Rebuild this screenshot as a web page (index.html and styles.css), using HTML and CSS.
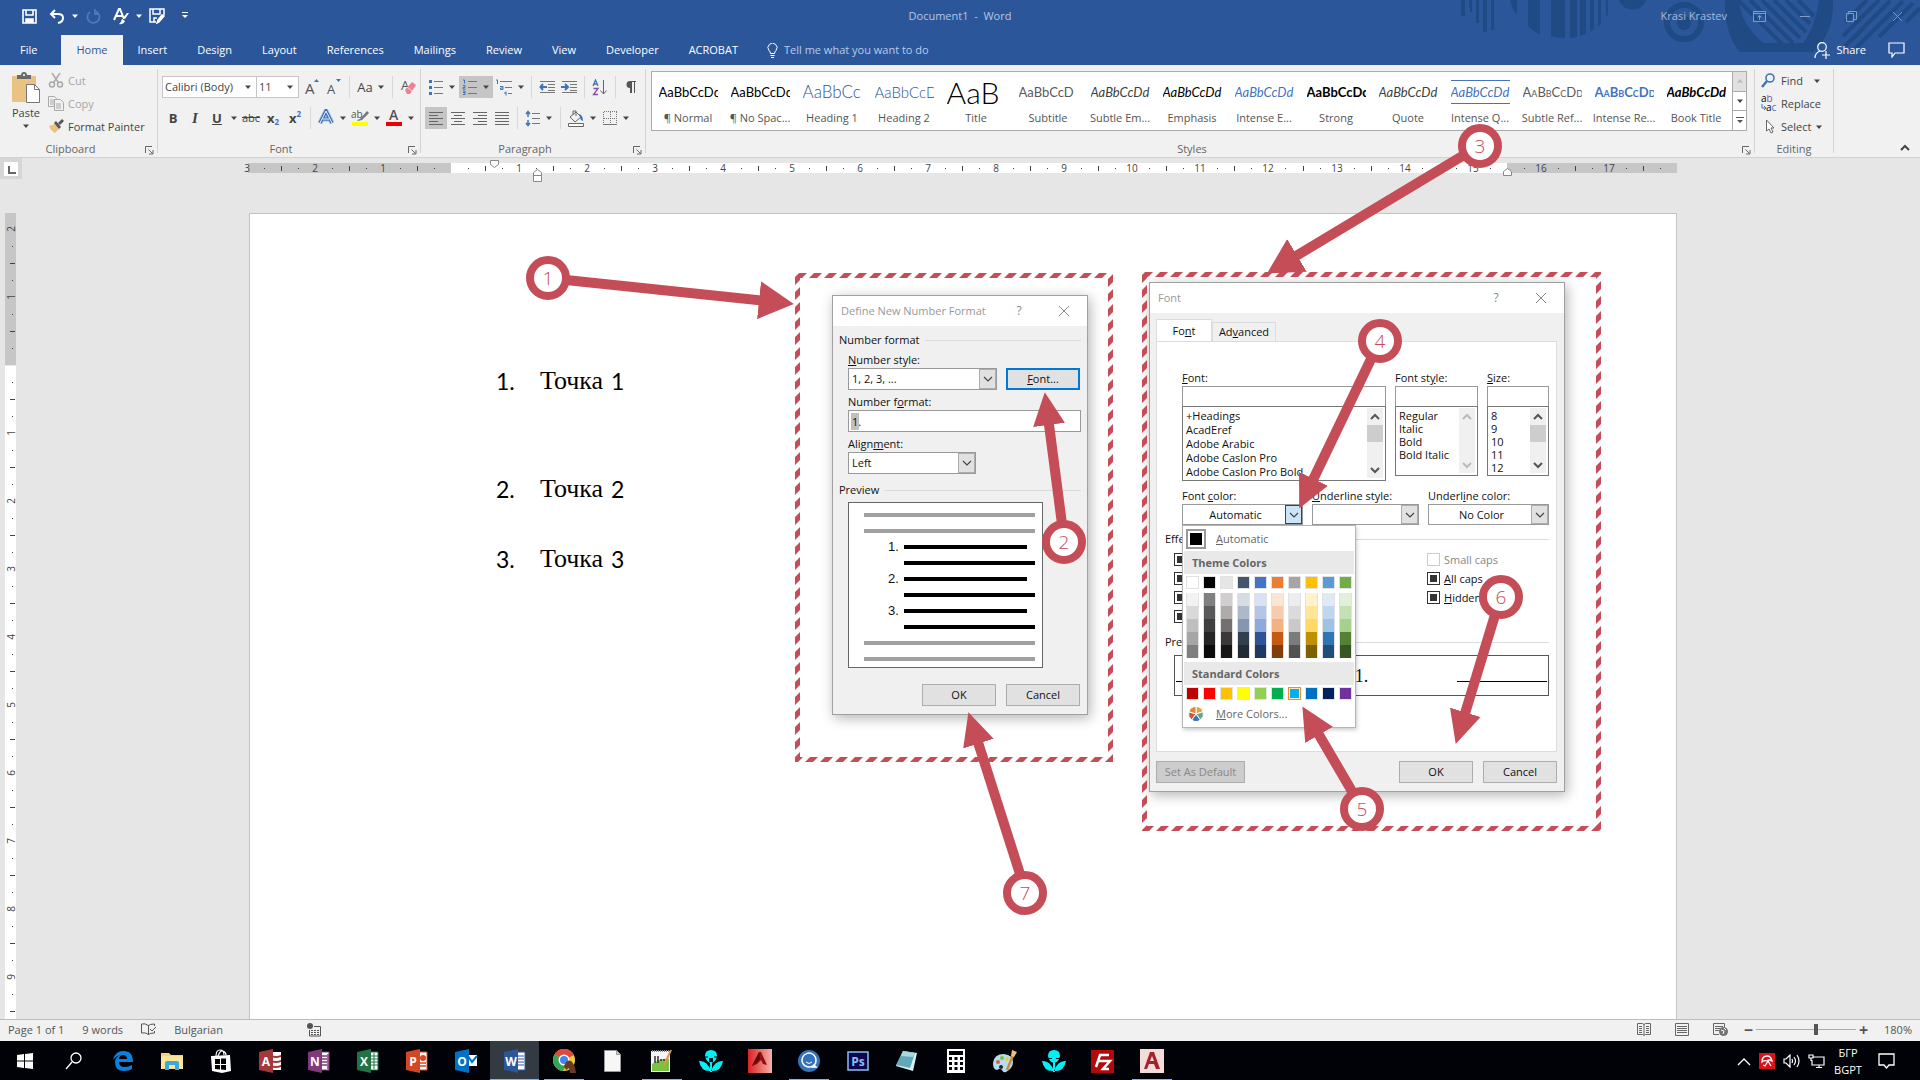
FILE: index.html
```html
<!DOCTYPE html>
<html lang="en">
<head>
    <meta charset="UTF-8">
    <meta name="viewport" content="width=device-width, initial-scale=1.0">
    <title>Document1 - Word</title>
    <link rel="stylesheet" href="styles.css">
</head>
<body>
    <!-- Shared icons -->
    <svg class="sprite" width="0" height="0">
        <symbol id="down" viewBox="0 0 8 8"><path d="M1 2.5h6L4 6z" fill="currentColor"/></symbol>
        <symbol id="chevron" viewBox="0 0 10 10"><path d="M1 3l4 4 4-4" fill="none" stroke="currentColor" stroke-width="1.2"/></symbol>
        <symbol id="chevron-up" viewBox="0 0 10 10"><path d="M1 7l4-4 4 4" fill="none" stroke="currentColor" stroke-width="2"/></symbol>
        <symbol id="chevron-down" viewBox="0 0 10 10"><path d="M1 3l4 4 4-4" fill="none" stroke="currentColor" stroke-width="2"/></symbol>
        <symbol id="launcher" viewBox="0 0 9 9"><path d="M.5 7V.5H7M3.500 3.500l4 4M8 4v4H4" fill="none" stroke="#666"/></symbol>
        <symbol id="cross" viewBox="0 0 12 12"><path d="M1 1l10 10M11 1L1 11" fill="none" stroke="currentColor"/></symbol>
    </svg>

    <header class="top">
        <svg class="art" width="480" height="65" viewBox="1440 0 480 65">
            <g fill="#204a84">
                <path d="M1461 0h4v16h-4zM1469 0h3v7h-3zM1476 0h3v23h-3zM1483 0h4v32h-4zM1491 0h3v30h-3zM1470 0h2v12h-2z"/>
                <path d="M1510 0h7v15q-5-6-7-15zM1528 0h12v35q-7-4-12-9zM1551 0h14v38q-8 0-14-2zM1570 0h7v37l-7 1zM1580 0h6v34l-6 2zM1590 0h4v29l-4 3zM1598 0h3v23l-3 4zM1606 0h2v14l-2 3z"/>
                <path d="M1619 0a14 13 0 0 0 27 0z"/>
                <circle cx="1684" cy="23" r="7"/>
                <path d="M1725 0h14q1 18 14 33l10 10h40q12-15 16-43h14q1 34-20 52h-73q-16-18-15-52z"/>
            </g>
            <circle cx="1684" cy="22" r="17" fill="none" stroke="#204a84" stroke-width="6"/>
            <g stroke="#204a84" stroke-width="4" fill="none">
                <path d="M1738 0l44 44M1750 0l43 43M1762 0l38 38M1774 0l32 32M1786 0l24 24M1798 0l16 16M1845 22l22-22M1843 36l36-36M1845 46l45-45M1852 52l51-51M1879 37l34-34M1906 22l14-14M1852 40l12-12" />
            </g>
        </svg>
        <div class="titlebar">
            <div class="quick">
                <button aria-label="Save"><svg width="15" height="15" viewBox="0 0 15 15" fill="none" stroke="#fff" stroke-width="1.600"><path d="M1 1h13v13H1zM4 1v5h7V1"/><path d="M4 14v-4h7v4" fill="#fff"/></svg></button>
                <button aria-label="Undo"><svg width="16" height="15" viewBox="0 0 16 15" fill="none" stroke="#fff" stroke-width="2"><path d="M6 1L2 5l4 4M2 5h7q5 0 5 4t-5 5"/></svg></button>
                <button class="arrow" aria-label="Undo list"><svg width="8" height="8"><use href="#down"/></svg></button>
                <button class="dim" aria-label="Repeat"><svg width="15" height="15" viewBox="0 0 15 15" fill="none" stroke="#5577b2" stroke-width="1.800"><path d="M10 2.500A6 6 0 1 1 4 3M9 0v5h4"/></svg></button>
                <button aria-label="Style"><svg width="17" height="17" viewBox="0 0 17 17"><path d="M1 12L6 1h1l4 10M3 8h6" fill="none" stroke="#fff" stroke-width="2"/><path d="M16 5l-4 6-2-1 4-5zM9 11l3 2q-2 4-6 3 2-1 3-5z" fill="#fff"/></svg></button>
                <button class="arrow" aria-label="Style list"><svg width="8" height="8"><use href="#down"/></svg></button>
                <button aria-label="Save as"><svg width="17" height="16" viewBox="0 0 17 16" fill="none" stroke="#fff" stroke-width="1.500"><path d="M7 14H1V1h14v6M4 1v5h7V1M5 14v-4h3"/><path d="M15 8l-5 6-2 1 1-3 4-5z" fill="#fff"/></svg></button>
                <button aria-label="Customize"><svg width="8" height="10" viewBox="0 0 8 10" fill="#fff"><path d="M1 1h6v1H1zM1 4h6L4 7z"/></svg></button>
            </div>
            <div class="doc-title">Document1&nbsp; -&nbsp; Word</div>
            <div class="window-tools">
                <span>Krasi Krastev</span>
                <button aria-label="Ribbon options"><svg width="13" height="11" viewBox="0 0 13 11" fill="none" stroke="currentColor"><path d="M.5.500h12v10H.5zM.5 2.500h12M6.500 9V4.500M4.500 6.500l2-2 2 2"/></svg></button>
                <button aria-label="Minimize"><svg width="10" height="10" viewBox="0 0 10 10"><path d="M0 5.500h10" stroke="currentColor"/></svg></button>
                <button aria-label="Restore"><svg width="11" height="11" viewBox="0 0 11 11" fill="none" stroke="currentColor"><path d="M.5 2.500h7v8h-7zM2.500 2V.5h8v8H8"/></svg></button>
                <button aria-label="Close"><svg width="11" height="11"><use href="#cross"/></svg></button>
            </div>
        </div>
        <nav class="tabs">
            <a class="file" href="#">File</a>
            <a class="active" href="#">Home</a>
            <a href="#">Insert</a>
            <a href="#">Design</a>
            <a href="#">Layout</a>
            <a href="#">References</a>
            <a href="#">Mailings</a>
            <a href="#">Review</a>
            <a href="#">View</a>
            <a href="#">Developer</a>
            <a href="#">ACROBAT</a>
            <a class="tell" href="#"><svg width="11" height="15" viewBox="0 0 11 15" fill="none" stroke="#fff"><path d="M3.500 10.500Q3.500 9 2 7.500a4.500 4.500 0 1 1 7 0Q7.500 9 7.500 10.500zM3.500 12.500h4M4 14.500h3"/></svg>Tell me what you want to do</a>
            <a class="share" href="#"><svg width="16" height="17" viewBox="0 0 16 17" fill="none" stroke="#fff" stroke-width="1.200"><circle cx="8" cy="5" r="4.300"/><path d="M1 16q0-5 5-7M12 9v8M8 13h8"/></svg>Share</a>
            <button class="comment" aria-label="Comments"><svg width="17" height="16" viewBox="0 0 17 16" fill="none" stroke="#fff" stroke-width="1.200"><path d="M1 1h15v10H7l-3 4v-4H1z"/></svg></button>
        </nav>
    </header>

    <section class="ribbon">
        <div class="group clipboard">
            <div class="content">
                <button class="paste">
                    <svg width="30" height="32" viewBox="0 0 30 32"><path d="M1 4h24v26H1z" fill="#eac282"/><path d="M6 7V3h4q0-3 3-3t3 3h4v4z" fill="#6a6a6a"/><circle cx="13" cy="3" r="1" fill="#fff"/><path d="M15.500 12.500h8l5 5v13h-13z" fill="#fff" stroke="#777"/><path d="M23.500 12.500v5h5" fill="none" stroke="#777"/></svg>
                    Paste
                    <svg width="8" height="8"><use href="#down"/></svg>
                </button>
                <div class="stack">
                    <button class="off"><svg width="16" height="15" viewBox="0 0 16 15" fill="none" stroke="#aaa" stroke-width="1.500"><path d="M4 0l6 9M12 0L6 9"/><circle cx="4" cy="11.500" r="2.500"/><circle cx="12" cy="11.500" r="2.500"/></svg>Cut</button>
                    <button class="off"><svg width="16" height="15" viewBox="0 0 16 15" fill="#f1f1f1" stroke="#aaa"><path d="M.5.500h6l2 2v8h-8zM2 4h4M2 6h4M2 8h4"/><path d="M6.500 3.500h6l3 3v8h-9zM8 8h5M8 10h5M8 12h5"/></svg>Copy</button>
                    <button><svg width="16" height="15" viewBox="0 0 16 15"><path d="M1 7l6-2 4 5-4 4q-4-2-6-7z" fill="#eac282"/><path d="M6 4l2-2 5 6-2 2zM10 4l4-4 2 2-4 4z" fill="#555"/></svg>Format Painter</button>
                </div>
            </div>
            <div class="caption">Clipboard<svg width="9" height="9"><use href="#launcher"/></svg></div>
        </div>

        <div class="group font">
            <div class="content">
                <div class="row">
                    <div class="box wide"><select aria-label="Font"><option>Calibri (Body)</option></select><svg width="8" height="8"><use href="#down"/></svg></div>
                    <div class="box narrow"><select aria-label="Font size"><option>11</option></select><svg width="8" height="8"><use href="#down"/></svg></div>
                    <button aria-label="Grow font"><svg width="16" height="18" viewBox="0 0 16 18"><text x="1" y="16" font-size="15">A</text><path d="M10 4h5l-2.500-3z" fill="#3f74b8"/></svg></button>
                    <button aria-label="Shrink font"><svg width="16" height="18" viewBox="0 0 16 18"><text x="1" y="16" font-size="13">A</text><path d="M10 1h5l-2.500 3z" fill="#3f74b8"/></svg></button>
                    <i></i>
                    <button class="split" aria-label="Change case"><b class="case">Aa</b><svg width="8" height="8"><use href="#down"/></svg></button>
                    <i></i>
                    <button aria-label="Clear formatting"><svg width="17" height="18" viewBox="0 0 17 18"><text x="1" y="12" font-size="13">A</text><path d="M5 12l7-8 4 3-6 9H7z" fill="#ea8296"/><path d="M7 9l5 4" stroke="#f8d5dc"/></svg></button>
                </div>
                <div class="row">
                    <button class="bold">B</button>
                    <button class="ital">I</button>
                    <button class="under">U</button>
                    <button class="arrow" aria-label="Underline list"><svg width="8" height="8"><use href="#down"/></svg></button>
                    <button class="strike">abc</button>
                    <button class="bold">x<sub>2</sub></button>
                    <button class="bold">x<sup>2</sup></button>
                    <i></i>
                    <button class="split" aria-label="Text effects"><svg width="18" height="18" viewBox="0 0 18 18"><path d="M3 14L9 2l6 12M5.500 10h7" fill="none" stroke="#9dc0e8" stroke-width="5"/><path d="M3 14L9 2l6 12M5.500 10h7" fill="none" stroke="#2f66ad" stroke-width="3"/><path d="M3 14L9 2l6 12M5.500 10h7" fill="none" stroke="#fff" stroke-width="1"/></svg><svg width="8" height="8"><use href="#down"/></svg></button>
                    <button class="split" aria-label="Highlight"><svg width="18" height="18" viewBox="0 0 18 18"><text x="0" y="9" font-size="10">ab</text><path d="M16 2l-7 8-3 1 1 1 4-1 7-7z" fill="#777"/><path d="M1 13h16v4H1z" fill="#ff0"/></svg><svg width="8" height="8"><use href="#down"/></svg></button>
                    <button class="split" aria-label="Font color"><svg width="18" height="18" viewBox="0 0 18 18"><text x="4" y="11" font-size="14" font-weight="600">A</text><path d="M1 13h16v4H1z" fill="#e00"/></svg><svg width="8" height="8"><use href="#down"/></svg></button>
                </div>
            </div>
            <div class="caption">Font<svg width="9" height="9"><use href="#launcher"/></svg></div>
        </div>

        <div class="group para">
            <div class="content">
                <div class="row">
                    <button class="split" aria-label="Bullets"><svg width="16" height="16" viewBox="0 0 16 16"><path d="M1 1h3v3H1zM1 7h3v3H1zM1 13h3v3H1z" fill="#3f74b8"/><path d="M6 2.500h9M6 8.500h9M6 14.500h9" stroke="#777"/></svg><svg width="8" height="8"><use href="#down"/></svg></button>
                    <button class="split on" aria-label="Numbering"><svg width="16" height="16" viewBox="0 0 16 16"><path d="M1 1h1.500v3.500M1 6.500h2v2H1v1.500h2.500M1 12h2v3.500H1M1 13.500h2" fill="none" stroke="#3f74b8"/><path d="M6 2.500h9M6 8.500h9M6 14.500h9" stroke="#777"/></svg><svg width="8" height="8"><use href="#down"/></svg></button>
                    <button class="split" aria-label="Multilevel list"><svg width="18" height="17" viewBox="0 0 18 17"><path d="M1 1h1.500v4M5 7.500h3v3H5.500V9H8M11 12.500v4M9 14h2" fill="none" stroke="#3f74b8"/><path d="M5 2.500h12M10 8.500h7M13 14.500h4" stroke="#777"/></svg><svg width="8" height="8"><use href="#down"/></svg></button>
                    <i></i>
                    <button aria-label="Decrease indent"><svg width="17" height="14" viewBox="0 0 17 14" fill="none"><path d="M1 1.500h15M9 4.500h7M9 7.500h7M9 10.500h7M1 12.500h15" stroke="#777"/><path d="M8 7H2M4 4L1.500 7 4 10" stroke="#3f74b8" stroke-width="2"/></svg></button>
                    <button aria-label="Increase indent"><svg width="17" height="14" viewBox="0 0 17 14" fill="none"><path d="M1 1.500h15M9 4.500h7M9 7.500h7M9 10.500h7M1 12.500h15" stroke="#777"/><path d="M0 7h6M4 4l3 3-3 3" stroke="#3f74b8" stroke-width="2"/></svg></button>
                    <i></i>
                    <button aria-label="Sort"><svg width="16" height="17" viewBox="0 0 16 17" fill="none"><path d="M1 7l2.500-6L6 7M2 5h3" stroke="#3f74b8" stroke-width="1.300"/><path d="M1.500 9.500H6l-4.500 6H6" stroke="#8250a8" stroke-width="1.300"/><path d="M11.500 1v14M8.500 11.500l3 3.500 3-3.500" stroke="#666"/></svg></button>
                    <i></i>
                    <button aria-label="Show marks"><svg width="12" height="14" viewBox="0 0 12 14"><path d="M5 8a3.500 3.500 0 0 1 0-7h6v1h-1v11H9V2H7v11H5z" fill="#555"/></svg></button>
                </div>
                <div class="row">
                    <button class="on" aria-label="Align left"><svg width="15" height="13" viewBox="0 0 15 13" stroke="#666"><path d="M0 .5h14M0 3.500h9M0 6.500h14M0 9.500h9M0 12.500h14"/></svg></button>
                    <button aria-label="Center"><svg width="15" height="13" viewBox="0 0 15 13" stroke="#666"><path d="M0 .5h14M3 3.500h8M0 6.500h14M3 9.500h8M0 12.500h14"/></svg></button>
                    <button aria-label="Align right"><svg width="15" height="13" viewBox="0 0 15 13" stroke="#666"><path d="M0 .5h14M5 3.500h9M0 6.500h14M5 9.500h9M0 12.500h14"/></svg></button>
                    <button aria-label="Justify"><svg width="15" height="13" viewBox="0 0 15 13" stroke="#666"><path d="M0 .5h14M0 3.500h14M0 6.500h14M0 9.500h14M0 12.500h14"/></svg></button>
                    <i></i>
                    <button class="split" aria-label="Line spacing"><svg width="16" height="17" viewBox="0 0 16 17" fill="none"><path d="M7 3.500h8M7 8.500h8M7 13.500h8" stroke="#777"/><path d="M3 2v5M1 4l2-2.500L5 4M3 10v5M1 13l2 2.500L5 13" stroke="#3f74b8" stroke-width="1.500"/></svg><svg width="8" height="8"><use href="#down"/></svg></button>
                    <i></i>
                    <button class="split" aria-label="Shading"><svg width="18" height="17" viewBox="0 0 18 17" fill="none" stroke="#666"><path d="M3 7l6-5 5 5-6 5zM6 5V1h3v5"/><path d="M12 4q4 1 4 7-3-1-3-4z" fill="#3f74b8" stroke="none"/><path d="M1.500 13.500h15v3h-15z" fill="#fff"/></svg><svg width="8" height="8"><use href="#down"/></svg></button>
                    <button class="split" aria-label="Borders"><svg width="15" height="15" viewBox="0 0 15 15" fill="none" stroke="#777"><path d="M1 .5h13M1 7.500h13M.5 1v13M7.500 1v13M13.500 1v13" stroke-dasharray="1 1"/><path d="M0 13.500h14"/></svg><svg width="8" height="8"><use href="#down"/></svg></button>
                </div>
            </div>
            <div class="caption">Paragraph<svg width="9" height="9"><use href="#launcher"/></svg></div>
        </div>

        <div class="group styles">
            <div class="gallery">
                <button><span class="normal">AaBbCcDd</span>¶ Normal</button>
                <button><span class="normal">AaBbCcDd</span>¶ No Spac...</button>
                <button><span class="h1">AaBbCc</span>Heading 1</button>
                <button><span class="h2">AaBbCcD</span>Heading 2</button>
                <button><span class="title">AaB</span>Title</button>
                <button><span class="subtitle">AaBbCcD</span>Subtitle</button>
                <button><span class="em grey">AaBbCcDd</span>Subtle Em...</button>
                <button><span class="em">AaBbCcDd</span>Emphasis</button>
                <button><span class="em blue">AaBbCcDd</span>Intense E...</button>
                <button><span class="strong">AaBbCcDd</span>Strong</button>
                <button><span class="em grey">AaBbCcDd</span>Quote</button>
                <button><span class="em blue lined">AaBbCcDd</span>Intense Q...</button>
                <button><span class="caps">AaBbCcDd</span>Subtle Ref...</button>
                <button><span class="caps strong blue">AaBbCcDd</span>Intense Re...</button>
                <button><span class="em strong">AaBbCcDd</span>Book Title</button>
                <div class="pager">
                    <button class="off" aria-label="Row up"><svg width="8" height="8" viewBox="0 0 8 8"><path d="M1 5.500h6L4 2z" fill="#bbb"/></svg></button>
                    <button aria-label="Row down"><svg width="8" height="8"><use href="#down"/></svg></button>
                    <button aria-label="More styles"><svg width="8" height="9" viewBox="0 0 8 9"><path d="M0 1h8v1H0zM1 4h6L4 7z" fill="#555"/></svg></button>
                </div>
            </div>
            <div class="caption">Styles<svg width="9" height="9"><use href="#launcher"/></svg></div>
        </div>

        <div class="group editing">
            <div class="content">
                <div class="stack">
                    <button><svg width="16" height="15" viewBox="0 0 16 15" fill="none" stroke="#3f74b8"><circle cx="9" cy="5" r="4" stroke-width="1.600"/><path d="M6 8l-5 6" stroke-width="2.500"/></svg>Find<svg class="gap" width="8" height="8"><use href="#down"/></svg></button>
                    <button><svg width="16" height="17" viewBox="0 0 16 17"><text x="0" y="7" font-size="10">a<tspan fill="#8250a8">b</tspan></text><text x="5" y="16" font-size="10">a<tspan fill="#3f74b8">c</tspan></text><path d="M1 9v4h3M3 11l2 2-2 2" fill="none" stroke="#3f74b8"/></svg>Replace</button>
                    <button><svg width="16" height="15" viewBox="0 0 16 15"><path d="M5.500 1v11l2.500-2 2 4 2-1-2-4h3z" fill="#fff" stroke="#666"/></svg>Select<svg width="8" height="8"><use href="#down"/></svg></button>
                </div>
            </div>
            <div class="caption">Editing</div>
        </div>
        <div class="ribbon-end"><button aria-label="Collapse ribbon"><svg width="10" height="10"><use href="#chevron-up"/></svg></button></div>
    </section>

    <main class="workspace">
        <div class="corner"><span></span></div>
        <div class="ruler-h"><svg id="rulerH" width="1446" height="30" viewBox="240 158 1446 30"></svg></div>
        <div class="ruler-v"><svg id="rulerV" width="22" height="806" viewBox="0 213 22 806"></svg></div>
        <div class="canvas">
            <article class="page">
                <ol>
                    <li>Точка <b>1</b></li>
                    <li>Точка <b>2</b></li>
                    <li>Точка <b>3</b></li>
                </ol>

                <!-- Define New Number Format -->
                <section class="dialog number-dialog">
                    <div class="dialog-title">Define New Number Format<button>?</button><button aria-label="Close"><svg width="12" height="12"><use href="#cross"/></svg></button></div>
                    <div class="dialog-body">
                        <h2>Number format</h2>
                        <div class="indent">
                            <div class="field-row">
                                <div class="field grow">
                                    <label for="numStyle"><u>N</u>umber style:</label>
                                    <div class="combo"><select id="numStyle"><option>1, 2, 3, ...</option></select><span><svg width="10" height="10"><use href="#chevron"/></svg></span></div>
                                </div>
                                <button class="btn focus"><u>F</u>ont...</button>
                            </div>
                            <div class="field">
                                <label for="numFormat">Number f<u>o</u>rmat:</label>
                                <input class="marked" id="numFormat" type="text" value="1.">
                            </div>
                            <div class="field align">
                                <label for="align">Align<u>m</u>ent:</label>
                                <div class="combo"><select id="align"><option>Left</option></select><span><svg width="10" height="10"><use href="#chevron"/></svg></span></div>
                            </div>
                        </div>
                        <h2 class="next">Preview</h2>
                        <div class="list-preview">
                            <p class="light"></p>
                            <p class="light"></p>
                            <p class="short"><span>1.</span></p>
                            <p class="dark"></p>
                            <p class="short"><span>2.</span></p>
                            <p class="dark"></p>
                            <p class="short"><span>3.</span></p>
                            <p class="dark"></p>
                            <p class="light"></p>
                            <p class="light"></p>
                        </div>
                        <div class="buttons"><button class="btn">OK</button><button class="btn">Cancel</button></div>
                    </div>
                </section>

                <!-- Font -->
                <section class="dialog font-dialog">
                    <div class="dialog-title">Font<button>?</button><button aria-label="Close"><svg width="12" height="12"><use href="#cross"/></svg></button></div>
                    <div class="dialog-body">
                        <div class="dialog-tabs"><button class="current">Fo<u>n</u>t</button><button>Ad<u>v</u>anced</button></div>
                        <div class="panel">
                            <div class="inset lists">
                                <div class="field grow">
                                    <label for="fontName"><u>F</u>ont:</label>
                                    <input id="fontName" type="text">
                                    <div class="listbox tall"><select size="5" aria-label="Fonts"><option>+Headings</option><option>AcadEref</option><option>Adobe Arabic</option><option>Adobe Caslon Pro</option><option>Adobe Caslon Pro Bold</option></select>
                                        <div class="scroll"><svg width="10" height="10"><use href="#chevron-up"/></svg><b></b><svg width="10" height="10"><use href="#chevron-down"/></svg></div></div>
                                </div>
                                <div class="field style-col">
                                    <label for="fontStyle">Font st<u>y</u>le:</label>
                                    <input id="fontStyle" type="text">
                                    <div class="listbox"><select size="5" aria-label="Font styles"><option>Regular</option><option>Italic</option><option>Bold</option><option>Bold Italic</option></select>
                                        <div class="scroll idle"><svg width="10" height="10"><use href="#chevron-up"/></svg><svg width="10" height="10"><use href="#chevron-down"/></svg></div></div>
                                </div>
                                <div class="field size-col">
                                    <label for="fontSize"><u>S</u>ize:</label>
                                    <input id="fontSize" type="text">
                                    <div class="listbox"><select size="5" aria-label="Sizes"><option>8</option><option>9</option><option>10</option><option>11</option><option>12</option></select>
                                        <div class="scroll"><svg width="10" height="10"><use href="#chevron-up"/></svg><b></b><svg width="10" height="10"><use href="#chevron-down"/></svg></div></div>
                                </div>
                            </div>
                            <div class="inset colors">
                                <div class="field color-field">
                                    <label for="fontColor">Font <u>c</u>olor:</label>
                                    <div class="combo mid"><select id="fontColor"><option>Automatic</option></select><span class="hot"><svg width="10" height="10"><use href="#chevron"/></svg></span></div>
                                    <div class="palette">
                                        <button class="auto"><span class="black"></span><u>A</u>utomatic</button>
                                        <h3>Theme Colors</h3>
                                        <div class="swatches" id="themeColors"></div>
                                        <div class="swatches tints" id="themeTints"></div>
                                        <h3>Standard Colors</h3>
                                        <div class="swatches" id="standardColors"></div>
                                        <button class="more"><svg width="20" height="16" viewBox="-10 -8 20 16" stroke="#fff"><path d="M0 0V-7.500A7.500 7.500 0 0 1 7.100-2.300z" fill="#e8a33d"/><path d="M0 0L7.100-2.300A7.500 7.500 0 0 1 4.400 6z" fill="#6aa58c"/><path d="M0 0L4.400 6A7.500 7.500 0 0 1-4.400 6z" fill="#3f74b8"/><path d="M0 0L-4.400 6A7.500 7.500 0 0 1-7.100-2.300z" fill="#c95b3b"/><path d="M0 0L-7.100-2.300A7.500 7.500 0 0 1 0-7.500z" fill="#e0863c"/></svg><span><u>M</u>ore Colors...</span></button>
                                    </div>
                                </div>
                                <div class="field underline-field">
                                    <label for="ulStyle"><u>U</u>nderline style:</label>
                                    <div class="combo"><select id="ulStyle"><option></option></select><span><svg width="10" height="10"><use href="#chevron"/></svg></span></div>
                                </div>
                                <div class="field color-field">
                                    <label for="ulColor">Underl<u>i</u>ne color:</label>
                                    <div class="combo mid"><select id="ulColor"><option>No Color</option></select><span><svg width="10" height="10"><use href="#chevron"/></svg></span></div>
                                </div>
                            </div>
                            <h2>Effects</h2>
                            <div class="effects">
                                <label><input type="checkbox" class="mixed">Strikethrough</label>
                                <label class="disabled"><input type="checkbox" disabled>Small caps</label>
                                <label><input type="checkbox" class="mixed">Double strikethrough</label>
                                <label><input type="checkbox" class="mixed"><span><u>A</u>ll caps</span></label>
                                <label><input type="checkbox" class="mixed">Superscript</label>
                                <label><input type="checkbox" class="mixed"><span><u>H</u>idden</span></label>
                                <label><input type="checkbox" class="mixed">Subscript</label>
                            </div>
                            <h2 class="next">Preview</h2>
                            <div class="font-preview"><hr><span>1.</span><hr></div>
                        </div>
                        <div class="buttons"><button class="btn default" disabled>Set As Default</button><button class="btn">OK</button><button class="btn">Cancel</button></div>
                    </div>
                </section>

                <!-- Numbered callouts -->
                <svg class="callouts" width="1426" height="804" viewBox="250 214 1426 804">
                    <defs>
                        <pattern id="stripes" width="15" height="15" patternUnits="userSpaceOnUse"><path d="M7 0h8L0 15V7zM15 7v8H7z" fill="#c44d58"/></pattern>
                        <marker id="head" markerUnits="userSpaceOnUse" markerWidth="34" markerHeight="34" refX="8" refY="17" orient="auto"><path d="M0 1l33 16L0 33z" fill="#c44d58"/></marker>
                        <marker id="bigHead" markerUnits="userSpaceOnUse" markerWidth="38" markerHeight="40" refX="7" refY="20" orient="auto"><path d="M0 1l35 19L0 39z" fill="#c44d58"/></marker>
                    </defs>
                    <g fill="none" stroke="url(#stripes)" stroke-width="5">
                        <rect x="797.500" y="275.500" width="313" height="484"/>
                        <rect x="1144.500" y="274.500" width="454" height="554"/>
                    </g>
                    <g class="shafts">
                        <path d="M566 280L766 301" marker-end="url(#bigHead)"/>
                        <path d="M1062 524L1048 417" marker-end="url(#head)"/>
                        <path d="M1464 155L1291 259" marker-end="url(#bigHead)"/>
                        <path d="M1372 357L1310 486" marker-end="url(#head)"/>
                        <path d="M1353 793L1315 728" marker-end="url(#head)"/>
                        <path d="M1495 615L1463 720" marker-end="url(#head)"/>
                        <path d="M1020 874L976 736" marker-end="url(#head)"/>
                    </g>
                    <g class="rings">
                        <circle cx="548" cy="278" r="18"/><circle cx="1064" cy="542" r="18"/><circle cx="1480" cy="146" r="18"/><circle cx="1380" cy="341" r="18"/><circle cx="1362" cy="809" r="18"/><circle cx="1501" cy="597" r="18"/><circle cx="1025" cy="893" r="18"/>
                    </g>
                    <g class="digits">
                        <text x="548" y="285">1</text><text x="1064" y="549">2</text><text x="1480" y="153">3</text><text x="1380" y="348">4</text><text x="1362" y="816">5</text><text x="1501" y="604">6</text><text x="1025" y="900">7</text>
                    </g>
                </svg>
            </article>
        </div>
    </main>

    <footer class="status">
        <span>Page 1 of 1</span>
        <span>9 words</span>
        <svg width="15" height="13" viewBox="0 0 15 13" fill="none" stroke="#555"><path d="M7.500 2.500Q4 0 .5 1v9q4-1 7 1.500V2M7.500 2.500Q9 1 13.500 1v2M7.500 11.500Q9 10 13.500 10V8M9 6l2 2 4-4"/></svg>
        <span>Bulgarian</span>
        <svg class="macro" width="14" height="14" viewBox="0 0 14 14"><circle cx="3" cy="3" r="3" fill="#555"/><path d="M7 3.500h6.500v9.500H2.500V7" fill="none" stroke="#555"/><path d="M4 7.500h8M4 9.500h8M4 11.500h8" stroke="#555" stroke-dasharray="2 1"/></svg>
        <div class="status-right">
            <div class="views">
                <button aria-label="Read mode"><svg width="14" height="13" viewBox="0 0 14 13" fill="none" stroke="#666"><path d="M.5.500h5l1.500 1 1.500-1h5v11h-5l-1.500 1-1.500-1h-5zM7 1v11M2 3.500h3M2 5.500h3M2 7.500h3M2 9.500h3M9 3.500h3M9 5.500h3M9 7.500h3M9 9.500h3"/></svg></button>
                <button aria-label="Print layout"><svg width="14" height="13" viewBox="0 0 14 13" fill="none" stroke="#666"><path d="M.5.500h13v12H.5zM2 3.500h10M2 5.500h10M2 7.500h10M2 9.500h10"/></svg></button>
                <button aria-label="Web layout"><svg width="15" height="13" viewBox="0 0 15 13" fill="none" stroke="#666"><path d="M6 11.500H.5V.500h11V4M2 3.500h8M2 5.500h5M2 7.500h4"/><circle cx="10.500" cy="8.500" r="4" fill="#777"/><path d="M8 7l3 1-1 3M11 5l2 2" stroke="#fff"/></svg></button>
            </div>
            <div class="zoom"><b>−</b><input type="range" min="0" max="100" value="61" aria-label="Zoom"><b>+</b></div>
            <span>180%</span>
        </div>
    </footer>

    <nav class="taskbar">
        <button aria-label="Start"><svg width="16" height="16" viewBox="0 0 16 16" fill="#fff"><path d="M0 2l7-1v6.500H0zM8 1l8-1v7.500H8zM0 8.500h7V15l-7-1zM8 8.500h8V16l-8-1z"/></svg></button>
        <button aria-label="Search"><svg width="18" height="18" viewBox="0 0 18 18" fill="none" stroke="#fff" stroke-width="1.300"><circle cx="11" cy="6" r="5"/><path d="M7 10l-6 7"/></svg></button>
        <button aria-label="Edge"><svg width="22" height="22" viewBox="0 0 22 22"><path d="M1 10Q3 1 11.500 1 21 1 21 12H7q0 5 6 5 4 0 7-2v4q-3 2-8 2-9 0-9-9 0-4 5-7-4 1-7 5zM7 9h8q0-4-4-4-3.500 0-4 4z" fill="#0e7fdb"/></svg></button>
        <button aria-label="File Explorer"><svg width="22" height="20" viewBox="0 0 22 20"><path d="M0 2h8l2 2h12v14H0z" fill="#f3d477"/><path d="M0 5h22v13H0z" fill="#fbe59b"/><path d="M4 12q0-2 2-2h10q2 0 2 2v7h-4v-5H8v5H4z" fill="#39a9de"/></svg></button>
        <button aria-label="Store"><svg width="22" height="24" viewBox="0 0 22 24"><path d="M6 7q0-6 4-6t4 5M8 7q2-6 5-5 3 1 3 4" fill="none" stroke="#fff" stroke-width="1.200"/><path d="M1 7l19-1 1 16-9 2-10-2z" fill="#fff"/><path d="M5 10h5v5H5zM11 9.500h5V15h-5zM5 16h5v4.500L5 20zM11 16h5v5l-5-.5z" fill="#000"/></svg></button>
        <button aria-label="Access"><svg width="24" height="24" viewBox="0 0 24 24"><path d="M13 3h10v18H13z" fill="#fff"/><path d="M13 6q5 2 10 0v2q-5 2-10 0zM13 11q5 2 10 0v2q-5 2-10 0zM13 16q5 2 10 0v2q-5 2-10 0z" fill="#a4373a"/><path d="M1 3l14-3v24L1 21z" fill="#a4373a"/><text x="8" y="17">A</text></svg></button>
        <button aria-label="OneNote"><svg width="24" height="24" viewBox="0 0 24 24"><path d="M13 3h9v18h-9z" fill="#fff" stroke="#80397b"/><path d="M15 7h5M15 10h5M15 13h5M15 16h5M21 5v15" stroke="#80397b" stroke-width="1.500"/><path d="M1 3l14-3v24L1 21z" fill="#80397b"/><text x="8" y="17">N</text></svg></button>
        <button aria-label="Excel"><svg width="24" height="24" viewBox="0 0 24 24"><path d="M13 3h9v18h-9z" fill="#fff" stroke="#217346"/><path d="M14 7h8M14 10h8M14 13h8M14 16h8M18 4v16" stroke="#217346"/><path d="M1 3l14-3v24L1 21z" fill="#217346"/><text x="8" y="17">X</text></svg></button>
        <button aria-label="PowerPoint"><svg width="24" height="24" viewBox="0 0 24 24"><path d="M13 3h9v18h-9z" fill="#fff" stroke="#d24726"/><circle cx="18" cy="9" r="3" fill="#d24726"/><path d="M15 14h6M15 17h6" stroke="#d24726" stroke-width="1.500"/><path d="M1 3l14-3v24L1 21z" fill="#d24726"/><text x="8" y="17">P</text></svg></button>
        <button aria-label="Outlook"><svg width="24" height="24" viewBox="0 0 24 24"><path d="M13 6h10v11H13z" fill="#fff"/><path d="M14 7l4 6 5-6" fill="none" stroke="#0072c6" stroke-width="2"/><path d="M1 3l14-3v24L1 21z" fill="#0072c6"/><text x="8" y="17">O</text></svg></button>
        <button class="current" aria-label="Word"><svg width="24" height="24" viewBox="0 0 24 24"><path d="M13 3h9v18h-9z" fill="#fff" stroke="#2b579a"/><path d="M14 7h7M14 10h7M14 13h7M14 16h7" stroke="#2b579a"/><path d="M1 3l14-3v24L1 21z" fill="#2b579a"/><text x="8" y="17">W</text></svg></button>
        <button class="open" aria-label="Chrome"><svg width="24" height="24" viewBox="0 0 24 24"><circle cx="12" cy="11" r="11" fill="#f7c83b"/><path d="M12 11L2.500 5.500A11 11 0 0 1 22 6z" fill="#dd4b3e"/><path d="M12 11L2.500 5.500A11 11 0 0 0 11 22l5-9z" fill="#35a456"/><circle cx="12" cy="11" r="5.500" fill="#fff"/><circle cx="12" cy="11" r="4" fill="#4285f4"/><path d="M12 17q3-7 7-5 4 3 5 12h-6l-1-5-3 2z" fill="#6b3a22"/></svg></button>
        <button aria-label="Document"><svg width="17" height="22" viewBox="0 0 17 22"><path d="M.5.500h12l4 4v17H.5z" fill="#f7f7f7" stroke="#999"/><path d="M12.500.500v4h4" fill="#ccc" stroke="#999"/></svg></button>
        <button class="open" aria-label="Notepad++"><svg width="23" height="24" viewBox="0 0 23 24"><path d="M1 2h19v21H1z" fill="#f4f4f4"/><path d="M2 15q8-6 17-5v12H2z" fill="#7ac142"/><path d="M2 2h17" stroke="#888" stroke-width="2" stroke-dasharray="1 1"/><path d="M5 7v7M8 7v7M10 11h2M13 11h2" stroke="#333" stroke-width="1.500"/><path d="M22 1l-6 14-2 2V14l6-13z" fill="#d99a35"/></svg></button>
        <button aria-label="Flower"><svg width="24" height="24" viewBox="0 0 24 24" fill="#00f0f8"><path d="M6 7q0-6 6-6t6 6q-1 6-6 7-5-1-6-7zM11 13h2v10h-2zM0 12q8-1 12 10-10 1-12-10zM24 12q-8-1-12 10 10 1 12-10z"/><path d="M10 9h4v4h-4zM6 7.500h3v1H6zM15 7.500h3v1h-3z" fill="#011"/></svg></button>
        <button aria-label="AutoCAD"><svg width="24" height="24" viewBox="0 0 24 24"><defs><linearGradient id="cad"><stop stop-color="#d22"/><stop offset="1" stop-color="#f3b1ab"/></linearGradient></defs><path d="M0 0h24v24H0z" fill="url(#cad)"/><path d="M4 17L11 3h2l6 13-4-1-2-4-4 4z" fill="#8c1111"/><path d="M11 3l1 7-8 7z" fill="#5c0808"/></svg></button>
        <button class="open" aria-label="Chat"><svg width="24" height="24" viewBox="0 0 24 24"><circle cx="12" cy="12" r="11" fill="#3572b8"/><path d="M17 16a7 7 0 1 1 2-5q0 4-2 5l2 2h-5" fill="none" stroke="#fff" stroke-width="1.500"/><path d="M9 13q3 3 6 0" fill="none" stroke="#fff"/></svg></button>
        <button aria-label="Photoshop"><svg width="22" height="20" viewBox="0 0 22 20"><path d="M1 1h20v18H1z" fill="#0c0650" stroke="#8ac0ee" stroke-width="1.500"/><text x="11" y="15" class="ps">Ps</text></svg></button>
        <button aria-label="Notepad"><svg width="24" height="22" viewBox="0 0 24 22"><path d="M8 1l14 2-4 18L1 16z" fill="#dceff3"/><path d="M8 1l12 2-5 15L1 15z" fill="#5fa9b8"/><path d="M8 1l12 2-2 4L6 6z" fill="#a8d8e0"/></svg></button>
        <button aria-label="Calculator"><svg width="18" height="24" viewBox="0 0 18 24"><path d="M0 0h18v24H0z" fill="#fff"/><path d="M2 2h14v4H2z"/><path d="M2 9.500h14M2 14.500h14M2 19.500h14" stroke="#000" stroke-width="3" stroke-dasharray="3 2.500"/></svg></button>
        <button aria-label="Paint"><svg width="25" height="23" viewBox="0 0 25 23"><path d="M1 13Q2 4 12 4q9 1 9 8 0 6-7 10-3 1-4-2-2-2-5 0-4 0-4-7z" fill="#b7dcee"/><circle cx="6" cy="12" r="2" fill="#e25b45"/><circle cx="10" cy="8" r="2" fill="#7ac142"/><circle cx="15" cy="9" r="2" fill="#f7c83b"/><circle cx="9" cy="17" r="2" fill="#223"/><path d="M22 3l-7 17" stroke="#c98a4a" stroke-width="2.500"/><path d="M20 0l5 2-3 5-3-1z" fill="#eac282"/></svg></button>
        <button aria-label="Garden"><svg width="24" height="24" viewBox="0 0 24 24" fill="#00f0f8"><path d="M6 7q0-6 6-6t6 6q-1 6-6 7-5-1-6-7zM11 13h2v10h-2zM0 12q8-1 12 10-10 1-12-10zM24 12q-8-1-12 10 10 1 12-10z"/><path d="M6 9h4v1H6zM14 9h4v1h-4z" fill="#011"/></svg></button>
        <button aria-label="FileZilla"><svg width="23" height="23" viewBox="0 0 23 23"><path d="M0 0h23v23H0z" fill="#b3090b"/><path d="M18 5H9L5 17M8 11h6M12 11h7l-7 8h6" fill="none" stroke="#fff" stroke-width="2.500"/></svg></button>
        <button class="open" aria-label="AutoCAD 2017"><svg width="24" height="24" viewBox="0 0 24 24"><path d="M0 0h24v24H0z" fill="#f3ddda"/><path d="M4 20L10 3h4l6 17h-4l-2-5H9l-2 5zM10 12h4l-2-5z" fill="#a3232b"/></svg></button>
        <div class="tray">
            <svg width="14" height="9" viewBox="0 0 14 9" fill="none" stroke="#fff" stroke-width="1.300"><path d="M1 8l6-6 6 6"/></svg>
            <svg width="16" height="16" viewBox="0 0 16 16"><path d="M0 0h16v16H0z" fill="#d8121c"/><path d="M3 9q0-6 5-6 4 0 5 5-3-2-5 0-3-1-5 1zM9 8l-3 5-2-1M9 8l3 5" fill="none" stroke="#fff" stroke-width="1.300"/></svg>
            <svg width="17" height="14" viewBox="0 0 17 14" fill="none" stroke="#fff" stroke-width="1.200"><path d="M1 5h2l4-4v12L3 9H1zM9 5q1 2 0 4M11 3q3 4 0 8M14 1q4 6 0 12"/></svg>
            <svg width="17" height="14" viewBox="0 0 17 14" fill="none" stroke="#fff" stroke-width="1.200"><path d="M5 3h11v8H4V6M8 13.500h6M11 11v2M1 1h4v3H1zM3 4v3"/></svg>
            <div class="lang"><span>БГР</span><span>BGPT</span></div>
            <svg width="17" height="16" viewBox="0 0 17 16" fill="none" stroke="#fff" stroke-width="1.300"><path d="M1 1h15v11h-5l-2.500 3L6 12H1z"/></svg>
        </div>
    </nav>

    <script>
        const NS = 'http://www.w3.org/2000/svg';

        function add(parent, name, attrs, text) {
            const el = document.createElementNS(NS, name);
            for (const key in attrs) el.setAttribute(key, attrs[key]);
            if (text) el.textContent = text;
            parent.appendChild(el);
        }

        // Horizontal ruler: margins in grey, a number for each centimetre
        const h = document.getElementById('rulerH');
        add(h, 'rect', { x: 248, y: 163, width: 1429, height: 10, fill: '#c6c6c6' });
        add(h, 'rect', { x: 451, y: 163, width: 1056, height: 10, fill: '#fff' });
        for (let q = -12; q <= 71; q++) {
            const x = Math.round(451 + q * 17.03);
            if (q === 0 || q === 62) continue;
            if (q % 4 === 0) add(h, 'text', { x: x, y: 172, 'text-anchor': 'middle' }, Math.abs(q / 4));
            else if (q % 2 === 0) add(h, 'rect', { x: x, y: 166, width: 1, height: 5 });
            else add(h, 'rect', { x: x, y: 168, width: 1, height: 1 });
        }
        add(h, 'path', { d: 'M490.5 160.5h8v4l-4 3-4-3z', class: 'stop' });
        add(h, 'path', { d: 'M533.5 181.500v-9l4-3 4 3v9zM533.500 175.500h8', class: 'stop' });
        add(h, 'path', { d: 'M1503.5 175.500v-4l4-3 4 3v4z', class: 'stop' });

        // Vertical ruler
        const v = document.getElementById('rulerV');
        add(v, 'rect', { x: 5, y: 212, width: 11, height: 153, fill: '#c6c6c6' });
        add(v, 'rect', { x: 5, y: 366, width: 11, height: 653, fill: '#fff' });
        for (let q = -8; q <= 38; q++) {
            const y = 365 + q * 17;
            if (q === 0) continue;
            if (q % 4 === 0) add(v, 'text', { 'text-anchor': 'middle', transform: `translate(15 ${y}) rotate(-90)` }, Math.abs(q / 4));
            else if (q % 2 === 0) add(v, 'rect', { x: 10, y: y, width: 5, height: 1 });
            else add(v, 'rect', { x: 12, y: y, width: 1, height: 1 });
        }

        // Colour picker
        const theme = ['fff', '000', 'e7e6e6', '44546a', '4472c4', 'ed7d31', 'a5a5a5', 'ffc000', '5b9bd5', '70ad47'];
        const tints = [
            ['f2f2f2', '7f7f7f', 'd0cece', 'd6dce4', 'd9e2f3', 'fbe5d5', 'ededed', 'fff2cc', 'deebf6', 'e2efd9'],
            ['d9d9d9', '595959', 'aeabab', 'adb9ca', 'b4c6e7', 'f7cbac', 'dbdbdb', 'fee599', 'bdd7ee', 'c5e0b3'],
            ['bfbfbf', '3f3f3f', '757070', '8496b0', '8eaadb', 'f4b183', 'c9c9c9', 'ffd965', '9cc3e5', 'a8d08d'],
            ['a6a6a6', '262626', '3a3838', '323f4f', '2f5496', 'c55a11', '7b7b7b', 'bf9000', '2e75b5', '538135'],
            ['7f7f7f', '0c0c0c', '171616', '222a35', '1f3864', '833c0b', '525252', '7f6000', '1e4e79', '375623']
        ];
        const standard = ['c00000', 'ff0000', 'ffc000', 'ffff00', '92d050', '00b050', '00b0f0', '0070c0', '002060', '7030a0'];

        function fill(id, colors, picked) {
            document.getElementById(id).innerHTML = colors.map((c, i) =>
                `<button class="${i === picked ? 'picked' : ''}" aria-label="#${c}" style="background:#${c}"></button>`
            ).join('');
        }
        fill('themeColors', theme);
        fill('themeTints', tints.flat());
        fill('standardColors', standard, 6);
    </script>
</body>
</html>
```

FILE: styles.css
```css
* { box-sizing: border-box; }
body { margin: 0; min-height: 100vh; display: flex; flex-direction: column; font: 11px/16px "Open Sans", "Noto Sans", sans-serif; color: #444; background: #e6e6e6; overflow: hidden; }
button { font: inherit; color: inherit; background: none; border: 0; padding: 0; margin: 0; display: flex; align-items: center; justify-content: center; }
select, input { font: inherit; color: inherit; border: 0; border-radius: 0; outline: 0; margin: 0; padding: 0; background: #fff; appearance: none; min-width: 0; }
a { color: inherit; text-decoration: none; }
svg { flex: none; display: block; }
h2, h3, p { margin: 0; font-size: 11px; }
.sprite { position: absolute; }

/* Title bar and tabs */
.top { position: relative; background: #2b579a; color: #fff; }
.art { position: absolute; right: 0; top: 0; }
.titlebar { position: relative; display: grid; grid-template-columns: 1fr auto 1fr; align-items: center; height: 35px; padding-bottom: 3px; }
.quick { display: flex; padding-left: 15px; }
.quick button { width: 28px; height: 24px; }
.quick .arrow { width: 8px; }
.doc-title { color: #b3c6e3; }
.window-tools { display: flex; justify-content: flex-end; align-items: center; color: #a3b9dc; }
.window-tools span { margin-right: 9px; }
.window-tools button { width: 46px; height: 24px; color: #7f9bca; }
.tabs { position: relative; display: flex; height: 30px; line-height: 30px; }
.tabs a { padding: 0 15px; }
.tabs .file { padding: 0 24px 0 20px; }
.tabs .active { background: #f1f1f1; color: #2b579a; }
.tabs .tell, .tabs .share { display: flex; align-items: center; gap: 6px; }
.tabs .tell { color: #b9cbe8; padding-left: 14px; }
.tabs .share { margin-left: auto; padding: 0; }
.comment { margin: 0 15px 0 22px; }

/* Ribbon */
.ribbon { display: flex; height: 93px; background: #f1f1f1; border-bottom: 1px solid #d2d2d2; padding-top: 4px; }
.group { display: flex; flex-direction: column; flex: none; height: 84px; border-right: 1px solid #d2d2d2; }
.clipboard { width: 158px; }
.font { width: 263px; }
.para { width: 225px; }
.styles { flex: 1; min-width: 0; }
.editing { width: 79px; }
.group .content { height: 72px; flex: none; }
.caption { position: relative; flex: none; padding-right: 16px; text-align: center; color: #666; }
.editing .caption { padding: 0; }
.caption svg { position: absolute; right: 3px; top: 5px; }
.clipboard .content { display: flex; padding-left: 10px; }
.paste { flex-direction: column; width: 32px; height: 64px; margin-right: 6px; line-height: 18px; color: #444; }
.stack button { gap: 4px; height: 23px; }
.stack .off { color: #a6a6a6; }
.stack .gap { margin-left: 6px; }
.editing .content { padding-left: 6px; }
.font .content, .para .content { padding: 7px 0 0 4px; display: flex; flex-direction: column; gap: 9px; }
.row { display: flex; height: 22px; }
.row button { width: 22px; height: 22px; color: #444; }
.row text { font-family: "Open Sans", sans-serif; fill: #555; }
.row .arrow { width: 12px; }
.row .split { width: 34px; gap: 4px; }
.row .on { background: #c5c5c5; }
.row i { width: 1px; margin: 0 4px; background: #d8d8d8; }
.row .case { font-weight: 400; font-size: 13px; }
.row .bold { font-weight: 700; font-size: 13px; }
.row .ital { font: italic 700 15px "Liberation Serif", serif; }
.row .under { font-weight: 700; font-size: 13px; text-decoration: underline; }
.row .strike { text-decoration: line-through; }
.row sub, .row sup { font-size: 8px; line-height: 8px; color: #3f74b8; }
.row sub { align-self: flex-end; margin-bottom: 3px; }
.row sup { align-self: flex-start; margin-top: 3px; }
.box { display: flex; align-items: center; background: #fff; border: 1px solid #c6c6c6; padding: 0 4px 0 2px; }
.box select { flex: 1; }
.box.wide { width: 95px; }
.box.narrow { width: 43px; margin: 0 2px 0 -1px; }

/* Styles gallery */
.gallery { display: flex; flex: none; height: 60px; margin: 2px 7px 10px 5px; background: #fff; border: 1px solid #ababab; }
.gallery > button { flex: 1; flex-direction: column; justify-content: flex-end; padding-bottom: 4px; min-width: 0; white-space: nowrap; color: #555; }
.gallery span { display: flex; align-items: center; justify-content: flex-start; width: 59px; height: 24px; margin-bottom: 6px; overflow: hidden; font: 13px/24px Lato, sans-serif; color: #000; }
.gallery .h1 { font-size: 17px; font-weight: 300; color: #2f5496; }
.gallery .h2 { font-size: 15px; font-weight: 300; color: #2f5496; }
.gallery .title { font-size: 30px; font-weight: 300; }
.gallery .subtitle { color: #5a5a5a; }
.gallery .em { font-style: italic; }
.gallery .strong { font-weight: 700; }
.gallery .grey { color: #404040; }
.gallery .caps { font-variant: small-caps; color: #5a5a5a; }
.gallery .blue { color: #4472c4; }
.gallery .lined { border-top: 1px solid #4472c4; border-bottom: 1px solid #4472c4; }
.pager { display: flex; flex-direction: column; width: 14px; border-left: 1px solid #ababab; }
.pager button { flex: 1; }
.pager button + button { border-top: 1px solid #ababab; }
.pager .off { background: #e1e1e1; }
.ribbon-end { display: flex; align-items: flex-end; justify-content: flex-end; width: 86px; padding: 0 10px 4px 0; }

/* Workspace */
.workspace { flex: 1; display: grid; grid-template-columns: 22px 1fr; grid-template-rows: 55px 1fr; min-height: 0; }
.corner { width: 22px; height: 21px; background: #d6d6d6; padding: 4px; }
.corner span { display: block; width: 14px; height: 14px; background: #fff; padding: 4px; }
.corner span::before { content: ""; display: block; width: 6px; height: 6px; border: solid #666; border-width: 0 0 2px 2px; }
.ruler-h { display: flex; justify-content: center; padding-right: 16px; }
.ruler-h svg, .ruler-v svg { fill: #444; }
.ruler-h text, .ruler-v text { font: 10px "Open Sans", sans-serif; }
.ruler-v { overflow: hidden; }
.stop { fill: #fff; stroke: #888; }
.canvas { display: flex; justify-content: center; padding-right: 16px; }
.page { position: relative; width: 1428px; max-width: 100%; background: #fff; border: 1px solid #c3c3c3; border-bottom: 0; }
.page ol { margin: 0; padding: 151px 0 0 290px; list-style: none; font: 26px/32px "Liberation Serif", serif; counter-reset: item; color: #000; }
.page li { display: flex; gap: 8px; counter-increment: item; margin-bottom: 76px; }
.page li + li { margin-bottom: 38px; }
.page li::before { content: counter(item) "."; width: 36px; margin-left: -44px; }
.page li::before, .page li b { font-family: Lato, sans-serif; font-size: 23px; font-weight: 400; }

/* Dialogs */
.dialog { position: absolute; background: #f0f0f0; border: 1px solid #a0a0a0; box-shadow: 2px 3px 12px rgba(0,0,0,0.3); color: #111; }
.number-dialog { left: 582px; top: 81px; width: 256px; }
.font-dialog { left: 899px; top: 68px; width: 416px; }
.dialog-title { display: flex; align-items: center; height: 30px; padding: 0 8px; background: #fff; color: #999; }
.dialog-title button { width: 30px; height: 24px; margin-left: 15px; color: #888; font-size: 12px; }
.dialog-title button:first-of-type { margin-left: auto; }
.dialog-body { padding: 6px 6px 8px; }
.dialog h2 { display: flex; align-items: center; gap: 5px; font-weight: 400; }
.dialog h2::after { content: ""; flex: 1; height: 1px; background: #dcdcdc; }
.dialog h2.next { margin-top: 8px; }
.indent { padding-left: 9px; }
.field { display: flex; flex-direction: column; }
.field.grow { flex: 1; }
.number-dialog .field { margin-top: 4px; }
.field-row { display: flex; align-items: flex-end; gap: 9px; padding-right: 1px; }
.align { width: 128px; }
.field input, .combo { height: 22px; border: 1px solid #999; padding-left: 3px; }
.combo { display: flex; background: #fff; }
.combo select { flex: 1; }
.combo span { display: flex; align-items: center; justify-content: center; width: 17px; background: #e1e1e1; border: 1px solid #adadad; color: #444; }
.combo .hot { background: #cce4f7; border-color: #005499; }
.combo.mid select { text-align: center; text-align-last: center; }
.field .marked { background: linear-gradient(#c0c0c0, #c0c0c0) 2px center / 8px 17px no-repeat #fff; }
.btn { width: 74px; height: 22px; background: #e1e1e1; border: 1px solid #adadad; }
.btn.focus { border: 2px solid #0078d7; }
.btn.default { width: 89px; margin-right: auto; background: #ccc; color: #888; }
.buttons { display: flex; justify-content: flex-end; gap: 10px; margin-top: 16px; padding-right: 1px; }
.list-preview { width: 195px; height: 166px; margin: 4px 0 0 9px; padding: 4px 7px 0 15px; background: #fff; border: 1px solid #666; }
.list-preview p { display: flex; align-items: center; height: 16px; }
.list-preview p::after { content: ""; flex: 1; height: 4px; background: #000; }
.list-preview .light::after { background: #a0a0a0; }
.list-preview .dark { padding-left: 40px; }
.list-preview .short { padding: 0 8px 0 24px; }
.list-preview span { width: 16px; font: 13px/16px "Liberation Sans", sans-serif; }

.font-dialog .buttons { margin-top: 9px; }
.dialog-tabs { display: flex; align-items: flex-end; height: 22px; }
.dialog-tabs button { display: block; width: 64px; height: 19px; border: 1px solid #dcdcdc; border-bottom: 0; }
.dialog-tabs .current { width: 56px; height: 22px; background: #fff; }
.panel { background: #fff; border: 1px solid #dcdcdc; padding: 28px 7px 55px 8px; margin-right: 1px; }
.inset { display: flex; gap: 9px; padding-left: 17px; }
.style-col { width: 83px; }
.size-col { width: 62px; }
.font-dialog .field input, .font-dialog .combo { height: 21px; }
.listbox { display: flex; height: 70px; margin-top: -1px; padding: 1px 2px 0 3px; border: 1px solid #777; background: #fff; }
.listbox.tall { height: 75px; }
.listbox select { flex: 1; height: 67px; overflow: hidden; }
.listbox.tall select { height: 72px; }
.listbox option { min-height: 0; height: 13px; line-height: 13px; padding: 0; }
.listbox.tall option { height: 14px; line-height: 14px; }
.scroll { display: flex; flex-direction: column; align-items: center; width: 16px; margin-bottom: 2px; padding: 4px 0 3px; background: #f0f0f0; color: #555; }
.scroll b { width: 16px; height: 17px; margin-top: 3px; background: #cdcdcd; }
.scroll svg:last-child { margin-top: auto; }
.scroll.idle { color: #bbb; }
.colors { margin-top: 7px; margin-bottom: 6px; }
.color-field { position: relative; width: 121px; }
.underline-field { flex: 1; }
.effects { display: grid; grid-template-columns: 253px 1fr; padding: 3px 0 0 9px; }
.effects label { display: flex; align-items: center; gap: 4px; height: 19px; }
.effects .disabled { color: #888; }
.effects input { width: 13px; height: 13px; border: 1px solid #333; }
.effects .disabled input { border-color: #ccc; }
.effects .mixed { background: #333; box-shadow: inset 0 0 0 2px #fff; }
.font-preview { display: grid; grid-template-columns: 90px 1fr 90px; align-items: center; height: 41px; margin: 5px 0 0 9px; padding: 0 1px; border: 1px solid #555; font: 18px/20px "Liberation Serif", serif; text-align: center; }
.font-preview hr { width: 100%; height: 1px; margin: 12px 0 0; border: 0; background: #000; }

/* Colour picker */
.palette { position: absolute; left: 0; top: 100%; width: 174px; height: 203px; padding: 3px 1px; background: #fff; border: 1px solid #b5b5b5; box-shadow: 1px 2px 4px rgba(0,0,0,0.2); color: #666; }
.palette .auto, .palette .more { height: 20px; padding-left: 2px; }
.palette .black { width: 20px; height: 20px; margin-right: 10px; border: 2px solid #999; padding: 2px; background: #000 content-box; }
.palette h3 { height: 23px; margin: 2px 0; padding-left: 8px; line-height: 23px; background: #e9e9e9; }
.palette h3 ~ h3 { margin-top: 4px; }
.palette .more { margin-top: 4px; gap: 10px; }
.swatches { display: grid; grid-template-columns: repeat(10, 13px); gap: 0 4px; padding-left: 2px; }
.swatches button { height: 13px; border: 1px solid #e2e2e2; }
.tints { margin-top: 4px; }
.tints button { border-width: 0 1px; }
.swatches .picked { border-color: #e8912d; box-shadow: inset 0 0 0 1px #fce8b8; }

/* Callouts */
.callouts { position: absolute; left: 0; top: 0; overflow: visible; pointer-events: none; }
.shafts { fill: none; stroke: #c44d58; stroke-width: 10; }
.rings { fill: #fff; stroke: #c44d58; stroke-width: 8; }
.digits { font: 300 19px "Open Sans", sans-serif; text-anchor: middle; fill: #c44d58; }

/* Status bar */
.status { display: flex; align-items: center; gap: 18px; height: 22px; padding: 0 8px 2px; background: #f1f1f1; border-top: 1px solid #bcbcbc; color: #555; }
.macro { margin-left: 66px; }
.status-right { display: flex; align-items: center; gap: 16px; margin-left: auto; }
.views { display: flex; gap: 24px; }
.zoom { display: flex; align-items: center; gap: 3px; font-size: 16px; }
.zoom input { width: 100px; height: 14px; background: linear-gradient(#aaa, #aaa) center / 100% 1px no-repeat; }
.zoom input::-webkit-slider-thumb { appearance: none; width: 4px; height: 11px; background: #555; }

/* Taskbar */
.taskbar { display: flex; height: 40px; background: #000208; color: #fff; }
.taskbar > button { width: 49px; height: 40px; flex: none; }
.taskbar text { font: 700 12px "Open Sans", sans-serif; fill: #fff; text-anchor: middle; }
.taskbar .ps { fill: #8ac0ee; }
.taskbar .current { background: #333a42; box-shadow: inset 0 -2px #76b9ed; }
.taskbar .open { background: linear-gradient(#76b9ed, #76b9ed) center bottom / 40px 2px no-repeat; }
.tray { display: flex; align-items: center; gap: 8px; margin-left: auto; padding-right: 25px; }
.lang { display: flex; flex-direction: column; align-items: center; width: 30px; margin-right: 7px; line-height: 17px; }
```
